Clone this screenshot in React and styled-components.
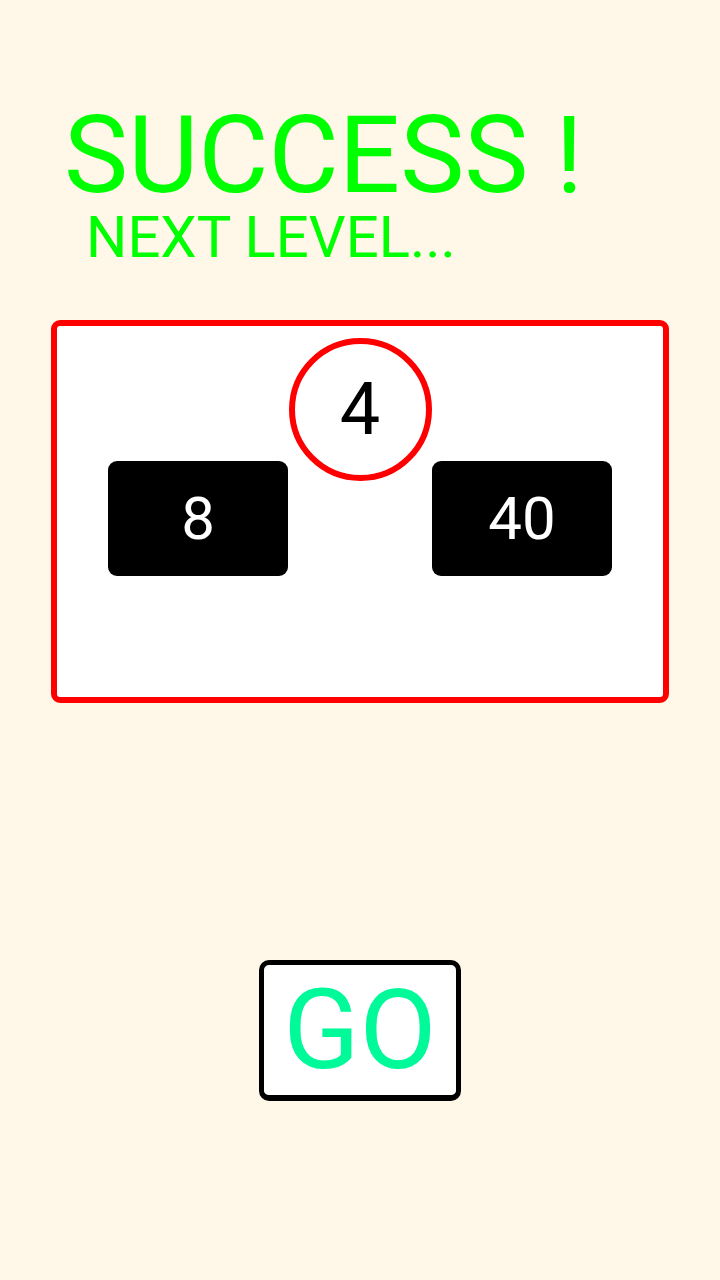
import styled, { createGlobalStyle } from 'styled-components'

const GlobalStyle = createGlobalStyle`
  html, body {
    margin: 0;
    padding: 0;
    background-color: #fff8e8;
  }
  body {
    font-family: Roboto, "Liberation Sans", sans-serif;
  }
`

const Screen = styled.div`
  width: 720px;
  height: 1280px;
  display: flex;
  flex-direction: column;
  background-color: #fff8e8;
`

const Title = styled.div`
  font-size: 108px;
  line-height: 106px;
  color: #00ff00;
  padding-left: 64px;
  margin-top: 102px;
  white-space: nowrap;
`

const SubTitle = styled.div`
  font-size: 58px;
  line-height: 58px;
  color: #00ff00;
  padding-left: 86px;
  white-space: nowrap;
`

const Card = styled.div`
  box-sizing: border-box;
  width: 618px;
  height: 383px;
  margin: 54px 0 0 51px;
  padding-top: 12px;
  border: 6px solid #ff0000;
  border-radius: 9px;
  background-color: #ffffff;
  display: flex;
  flex-direction: column;
  align-items: center;
`

const Target = styled.div`
  box-sizing: border-box;
  width: 143px;
  height: 143px;
  border: 6px solid #ff0000;
  border-radius: 50%;
  display: flex;
  align-items: center;
  justify-content: center;
  font-size: 72px;
  color: #000000;
  position: relative;
  z-index: 1;
`

const Row = styled.div`
  display: flex;
  justify-content: center;
  gap: 144px;
  margin-top: -20px;
`

const NumberBox = styled.div`
  width: 180px;
  height: 115px;
  border-radius: 9px;
  background-color: #000000;
  color: #ffffff;
  font-size: 60px;
  display: flex;
  align-items: center;
  justify-content: center;
`

const GoButton = styled.button`
  box-sizing: border-box;
  align-self: center;
  width: 202px;
  height: 141px;
  margin-top: 257px;
  padding: 0;
  border: 5px solid #000000;
  border-bottom-width: 6px;
  border-radius: 10px;
  background-color: #ffffff;
  color: #00fa9a;
  font-family: Roboto, "Liberation Sans", sans-serif;
  font-size: 112px;
  line-height: 1;
  display: flex;
  align-items: center;
  justify-content: center;
  cursor: pointer;
`

export default function App() {
  const numbers = [8, 40]
  return (
    <>
      <GlobalStyle />
      <Screen>
        <Title>SUCCESS !</Title>
        <SubTitle>NEXT LEVEL...</SubTitle>
        <Card>
          <Target>4</Target>
          <Row>
            {numbers.map((n) => (
              <NumberBox key={n}>{n}</NumberBox>
            ))}
          </Row>
        </Card>
        <GoButton>GO</GoButton>
      </Screen>
    </>
  )
}
